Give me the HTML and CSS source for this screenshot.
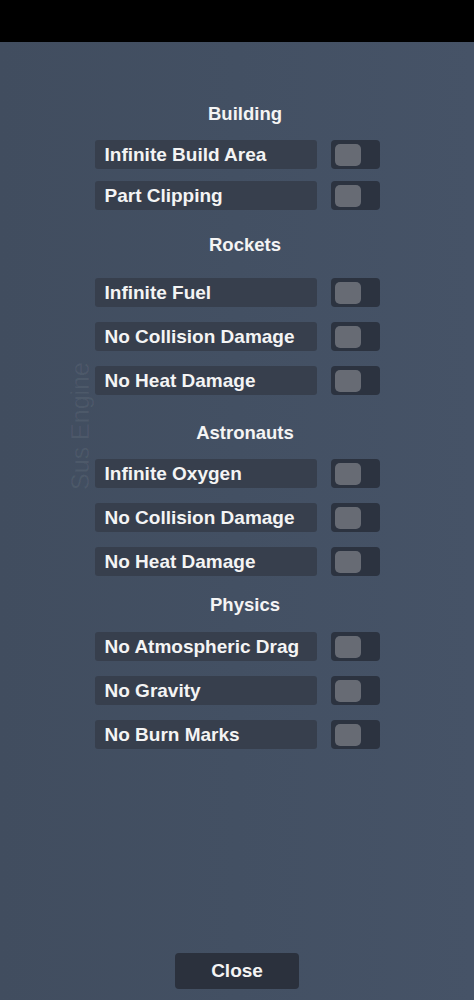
FILE: index.html
```html
<!DOCTYPE html>
<html lang="en">
<head>
<meta charset="utf-8">
<title>Cheats</title>
<link rel="stylesheet" href="styles.css">
</head>
<body>
<div class="status-bar"></div>
<main class="panel">
  <div class="watermark">Sus Engine</div>

  <section class="group group--building">
    <h2 class="group-title">Building</h2>
    <div class="row"><span class="label">Infinite Build Area</span><span class="toggle"><span class="knob"></span></span></div>
    <div class="row"><span class="label">Part Clipping</span><span class="toggle"><span class="knob"></span></span></div>
  </section>

  <section class="group group--rockets">
    <h2 class="group-title">Rockets</h2>
    <div class="row"><span class="label">Infinite Fuel</span><span class="toggle"><span class="knob"></span></span></div>
    <div class="row"><span class="label">No Collision Damage</span><span class="toggle"><span class="knob"></span></span></div>
    <div class="row"><span class="label">No Heat Damage</span><span class="toggle"><span class="knob"></span></span></div>
  </section>

  <section class="group group--astronauts">
    <h2 class="group-title">Astronauts</h2>
    <div class="row"><span class="label">Infinite Oxygen</span><span class="toggle"><span class="knob"></span></span></div>
    <div class="row"><span class="label">No Collision Damage</span><span class="toggle"><span class="knob"></span></span></div>
    <div class="row"><span class="label">No Heat Damage</span><span class="toggle"><span class="knob"></span></span></div>
  </section>

  <section class="group group--physics">
    <h2 class="group-title">Physics</h2>
    <div class="row"><span class="label">No Atmospheric Drag</span><span class="toggle"><span class="knob"></span></span></div>
    <div class="row"><span class="label">No Gravity</span><span class="toggle"><span class="knob"></span></span></div>
    <div class="row"><span class="label">No Burn Marks</span><span class="toggle"><span class="knob"></span></span></div>
  </section>

  <button class="close-btn" type="button">Close</button>
</main>
</body>
</html>
```

FILE: styles.css
```css
* {
  box-sizing: border-box;
}

html, body {
  margin: 0;
  padding: 0;
}

body {
  width: 474px;
  height: 1000px;
  overflow: hidden;
  background: #000;
  font-family: "Liberation Sans", Arial, sans-serif;
  color: #f3f3f3;
}

.status-bar {
  height: 42px;
  background: #000;
}

.panel {
  position: relative;
  height: 958px;
  display: flex;
  flex-direction: column;
  align-items: center;
  padding: 61px 0 11px;
  background: linear-gradient(90deg, #414d5f 0%, #435063 50%, #465367 100%);
}

/* faint vertical brand text on the left */
.watermark {
  position: absolute;
  left: 80px;
  top: 384px;
  transform: translate(-50%, -50%) rotate(-90deg);
  font-size: 25px;
  line-height: 26px;
  white-space: nowrap;
  color: rgba(255, 255, 255, 0.06);
}

.group {
  display: flex;
  flex-direction: column;
  width: 285px;
  gap: 15px;
}

.group-title {
  margin: 0 0 0;
  padding-left: 16px;
  font-size: 18.5px;
  line-height: 22px;
  font-weight: bold;
  text-align: center;
  color: #f4f4f4;
}

.group--building {
  gap: 12px;
}

.group--building .group-title {
  margin-bottom: 3px;
}

.group--rockets {
  margin-top: 24px;
}

.group--rockets .group-title {
  margin-bottom: 7px;
}

.group--astronauts {
  margin-top: 27px;
}

.group--physics {
  margin-top: 18px;
}

.group--physics .group-title {
  margin-bottom: 1px;
}

.row {
  display: flex;
  align-items: center;
  gap: 14px;
  height: 29px;
}

.label {
  flex: 0 0 222px;
  height: 29px;
  padding-left: 10px;
  border-radius: 3px;
  background: #373f4d;
  font-size: 19px;
  line-height: 29px;
  font-weight: bold;
  white-space: nowrap;
  color: #f4f4f4;
}

.toggle {
  display: flex;
  align-items: center;
  flex: 0 0 49px;
  height: 29px;
  padding-left: 4px;
  border-radius: 4px;
  background: #2c3340;
}

.knob {
  width: 26px;
  height: 22px;
  border-radius: 5px;
  background: #676b74;
}

.close-btn {
  margin-top: auto;
  width: 124px;
  height: 36px;
  border: 0;
  border-radius: 4px;
  background: #2b313d;
  font-family: "Liberation Sans", Arial, sans-serif;
  font-size: 19px;
  font-weight: bold;
  color: #f4f4f4;
  padding: 0;
}
```
